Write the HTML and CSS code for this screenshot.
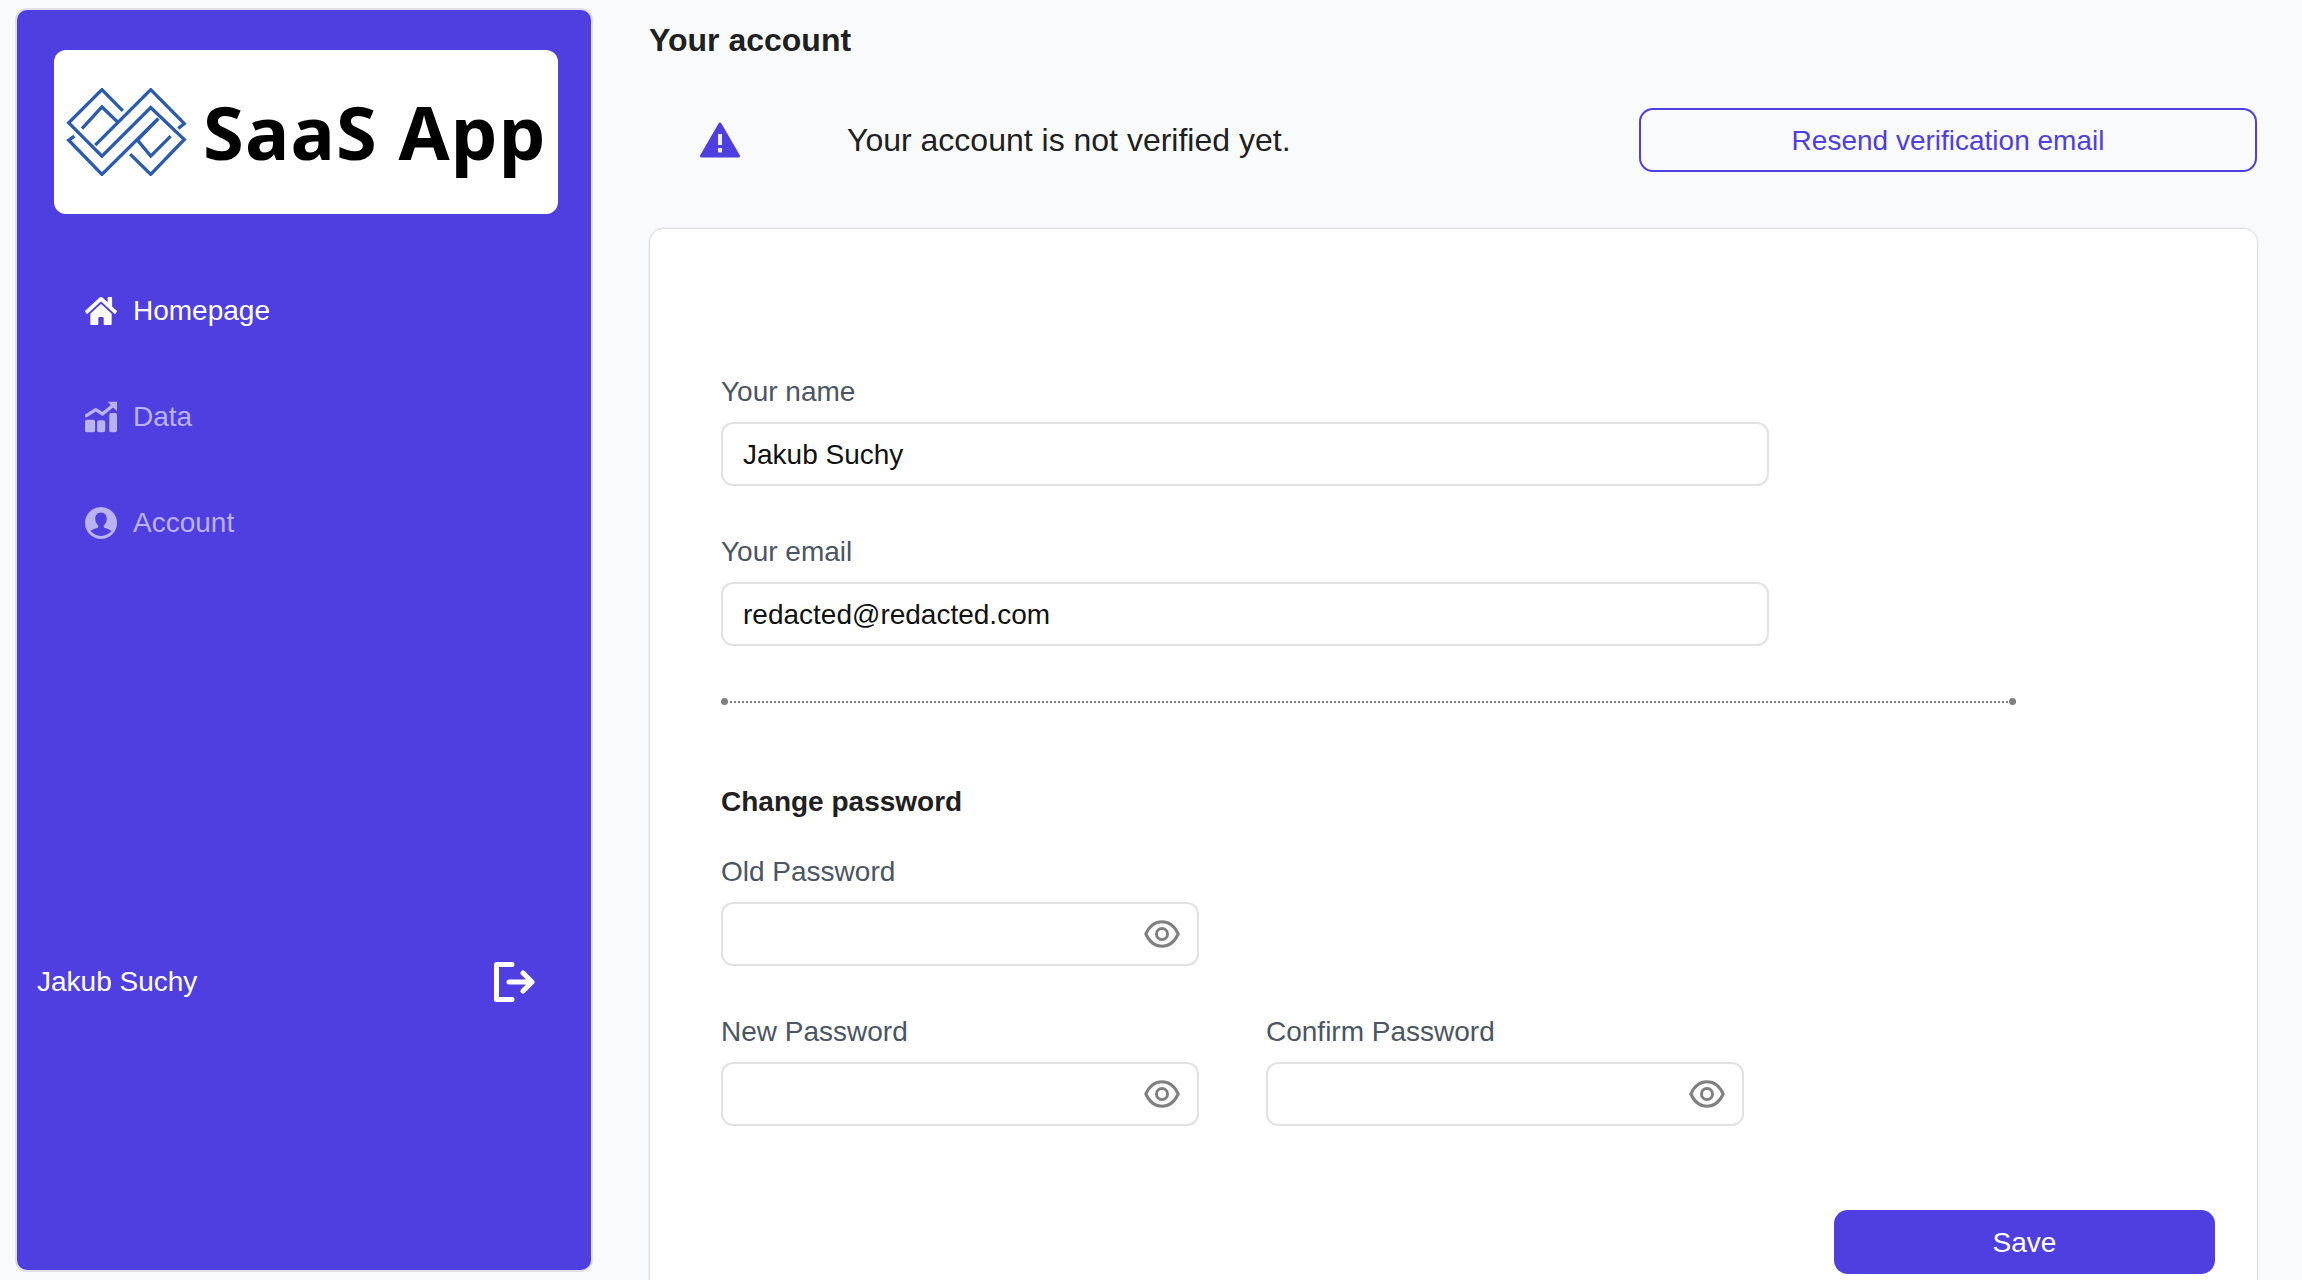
FILE: index.html
```html
<!DOCTYPE html>
<html lang="en">
<head>
  <meta charset="UTF-8">
  <meta name="viewport" content="width=device-width, initial-scale=1.0">
  <title>Your account</title>
  <link rel="stylesheet" href="styles.css">
</head>
<body>

  <!-- SIDEBAR -->
  <aside class="sidebar">
    <div class="logo">
      <svg class="logo-mark" viewBox="50 83 358 265" fill="none" stroke="#2a5bb0" stroke-width="10">
        <path d="M218 152L155 88L55 188L155 288L302 142L403 238L302 343L240 282"/>
        <path d="M95 205L155 140L205 188M135 255L302 88L403 190L385 205"/>
        <path d="M72 228L55 240L155 343L325 175L262 240L302 288L362 228"/>
      </svg>
      <span class="logo-text">SaaS App</span>
    </div>

    <nav class="menu">
      <a class="menu-item active" href="#">
        <svg class="menu-icon" viewBox="0 0 576 512" preserveAspectRatio="none" fill="currentColor">
          <path d="M280.37 148.26L96 300.11V464a16 16 0 0 0 16 16l112.06-.29a16 16 0 0 0 15.92-16V368a16 16 0 0 1 16-16h64a16 16 0 0 1 16 16v95.64a16 16 0 0 0 16 16.05L464 480a16 16 0 0 0 16-16V300L295.67 148.26a12.19 12.19 0 0 0-15.3 0zM571.6 251.47L488 182.56V44.05a12 12 0 0 0-12-12h-56a12 12 0 0 0-12 12v72.61L318.47 43a48 48 0 0 0-61 0L4.34 251.47a12 12 0 0 0-1.6 16.9l25.5 31A12 12 0 0 0 45.15 301l235.22-193.74a12.19 12.19 0 0 1 15.3 0L530.9 301a12 12 0 0 0 16.9-1.6l25.5-31a12 12 0 0 0-1.7-16.93z"/>
        </svg>
        Homepage
      </a>
      <a class="menu-item" href="#">
        <svg class="menu-icon" viewBox="75 397 95 90" fill="currentColor">
          <rect x="75" y="450" width="30" height="37" rx="6"/>
          <rect x="111" y="452" width="24" height="35" rx="6"/>
          <rect x="147" y="430" width="23" height="57" rx="6"/>
          <path d="M79 438L107 420L127 433L160 406" fill="none" stroke="currentColor" stroke-width="10" stroke-linecap="round" stroke-linejoin="round"/>
          <path d="M142 397H171V426Z"/>
        </svg>
        Data
      </a>
      <a class="menu-item" href="#">
        <svg class="menu-icon" viewBox="0 0 32 32">
          <circle cx="16" cy="16" r="16" fill="currentColor"/>
          <path d="M16 5.500c-3.500 0-6 2.800-5.800 6.600.2 2.800 1.400 5 3 6.300v2c-2.700 1-6 1.900-7.700 3.700C8.200 27.100 11.900 29 16 29s7.800-1.900 10.500-4.900c-1.700-1.800-5-2.700-7.700-3.700v-2c1.600-1.300 2.800-3.500 3-6.300.2-3.800-2.300-6.600-5.800-6.600z" fill="#4f3ee0"/>
        </svg>
        Account
      </a>
    </nav>

    <div class="user">
      <span>Jakub Suchy</span>
      <svg class="logout" viewBox="0 0 41 40" fill="none" stroke="#fff" stroke-width="5" stroke-linecap="round" stroke-linejoin="round">
        <path d="M18 2.500H2.500V37.500H18"/>
        <path d="M15 20H38M29 11L38 20L29 29"/>
      </svg>
    </div>
  </aside>

  <!-- CONTENT -->
  <main class="content">
    <h1>Your account</h1>

    <div class="notice">
      <svg class="notice-icon" viewBox="0 0 40 36">
        <path d="M20 2L38.500 34H1.500Z" fill="#4f3ee0" stroke="#4f3ee0" stroke-width="3" stroke-linejoin="round"/>
        <rect x="18" y="12" width="4" height="11" fill="#f0eefc"/>
        <rect x="18" y="26" width="4" height="4.500" fill="#f0eefc"/>
      </svg>
      <p>Your account is not verified yet.</p>
      <button class="btn-outline">Resend verification email</button>
    </div>

    <section class="card">
      <label class="field wide">
        <span>Your name</span>
        <input type="text" value="Jakub Suchy">
      </label>
      <label class="field wide">
        <span>Your email</span>
        <input type="text" value="redacted@redacted.com">
      </label>

      <div class="divider"></div>

      <h2>Change password</h2>

      <div class="password-row">
        <label class="field">
          <span>Old Password</span>
          <div class="password">
            <input type="password">
            <svg class="eye" viewBox="0 0 36 28" fill="none" stroke="#808080" stroke-width="3"><path d="M1.800 14C5.500 6 11 1.800 18 1.800S30.500 6 34.200 14C30.500 22 25 26.200 18 26.200S5.500 22 1.800 14Z"/><circle cx="18" cy="14" r="5.500"/></svg>
          </div>
        </label>
      </div>
      <div class="password-row">
        <label class="field">
          <span>New Password</span>
          <div class="password">
            <input type="password">
            <svg class="eye" viewBox="0 0 36 28" fill="none" stroke="#808080" stroke-width="3"><path d="M1.800 14C5.500 6 11 1.800 18 1.800S30.500 6 34.200 14C30.500 22 25 26.200 18 26.200S5.500 22 1.800 14Z"/><circle cx="18" cy="14" r="5.500"/></svg>
          </div>
        </label>
        <label class="field">
          <span>Confirm Password</span>
          <div class="password">
            <input type="password">
            <svg class="eye" viewBox="0 0 36 28" fill="none" stroke="#808080" stroke-width="3"><path d="M1.800 14C5.500 6 11 1.800 18 1.800S30.500 6 34.200 14C30.500 22 25 26.200 18 26.200S5.500 22 1.800 14Z"/><circle cx="18" cy="14" r="5.500"/></svg>
          </div>
        </label>
      </div>

      <div class="actions">
        <button class="btn-primary">Save</button>
      </div>
    </section>
  </main>

</body>
</html>
```

FILE: styles.css
```css
* {
  box-sizing: border-box;
  margin: 0;
  padding: 0;
}

html, body {
  height: 1280px;
  overflow: hidden;
}

body {
  display: flex;
  background: #f9fafb;
  color: #1f2022;
  font-family: 'Liberation Sans', Arial, sans-serif;
  font-size: 28px;
}

/* Sidebar */
.sidebar {
  width: 574px;
  height: 1260px;
  margin: 10px 0 0 17px;
  flex-shrink: 0;
  display: flex;
  flex-direction: column;
  background: #4f3ee0;
  border-radius: 10px;
  box-shadow: 0 0 0 2px #e0e1e6;
  color: #fff;
}

.logo {
  width: 504px;
  height: 164px;
  margin: 40px 0 0 37px;
  padding-left: 12px;
  display: flex;
  align-items: center;
  gap: 16px;
  background: #fff;
  border-radius: 12px;
}

.logo-mark {
  width: 121px;
  height: 88px;
  flex-shrink: 0;
}

.logo-text {
  color: #000;
  font-family: 'Noto Sans', sans-serif;
  font-weight: 700;
  font-size: 74px;
  letter-spacing: 1.2px;
  line-height: 1;
  white-space: nowrap;
}

.menu {
  margin-top: 81px;
  padding-left: 68px;
  display: flex;
  flex-direction: column;
  gap: 74px;
}

.menu-item {
  height: 32px;
  display: flex;
  align-items: center;
  gap: 16px;
  color: #b9b2f3;
  text-decoration: none;
}

.menu-item.active {
  color: #fff;
}

.menu-icon {
  width: 32px;
  height: 32px;
  flex-shrink: 0;
}

.user {
  margin-top: 423px;
  padding: 0 56px 0 20px;
  height: 40px;
  display: flex;
  align-items: center;
  justify-content: space-between;
}

.logout {
  width: 41px;
  height: 40px;
}

/* Content */
.content {
  flex: 1;
  margin: 0 45px 0 59px;
}

h1 {
  height: 80px;
  margin-left: -1px;
  padding-top: 22px;
  font-size: 32px;
  line-height: 37px;
}

.notice {
  height: 149px;
  display: flex;
  align-items: flex-start;
  padding-top: 28px;
}

.notice-icon {
  width: 40px;
  height: 36px;
  margin: 14px 107px 0 50px;
  flex-shrink: 0;
}

.notice p {
  font-size: 32px;
  line-height: 64px;
}

.btn-outline {
  width: 618px;
  height: 64px;
  margin-left: auto;
  padding-top: 1px;
  background: none;
  border: 2px solid #4f3ee0;
  border-radius: 14px;
  color: #4f3ee0;
  font: inherit;
}

.card {
  height: 1200px;
  padding: 147px 42px 0 71px;
  background: #fff;
  border-radius: 14px;
  box-shadow: 0 0 2px 1px rgba(0, 0, 0, 0.14);
}

.field {
  display: block;
  width: 478px;
}

.field.wide {
  width: 1048px;
  margin-bottom: 50px;
}

.field span {
  display: block;
  margin-bottom: 14px;
  height: 32px;
  line-height: 32px;
  color: #4b5563;
}

input {
  width: 100%;
  height: 64px;
  padding: 2px 20px 0;
  border: 2px solid #e1e2e4;
  border-radius: 12px;
  background: #fff;
  color: #111;
  font: inherit;
}

.divider {
  position: relative;
  width: 1295px;
  margin: 55px 0 83px;
  border-top: 2px dotted #808080;
}

/* end dots of the line */
.divider::before,
.divider::after {
  content: "";
  position: absolute;
  top: -5px;
  width: 7px;
  height: 7px;
  border-radius: 50%;
  background: #808080;
}

.divider::before { left: 0; }
.divider::after { right: 0; }

h2 {
  height: 32px;
  margin-bottom: 38px;
  font-size: 28px;
  line-height: 32px;
}

.password-row {
  display: flex;
  gap: 67px;
  margin-bottom: 50px;
}

.password {
  position: relative;
}

.eye {
  position: absolute;
  right: 19px;
  top: 18px;
  width: 36px;
  height: 28px;
}

.actions {
  display: flex;
  justify-content: flex-end;
  margin-top: 84px;
}

.btn-primary {
  width: 381px;
  height: 64px;
  padding-top: 2px;
  border: 0;
  border-radius: 14px;
  background: #4f3ee0;
  color: #fff;
  font: inherit;
}
```
